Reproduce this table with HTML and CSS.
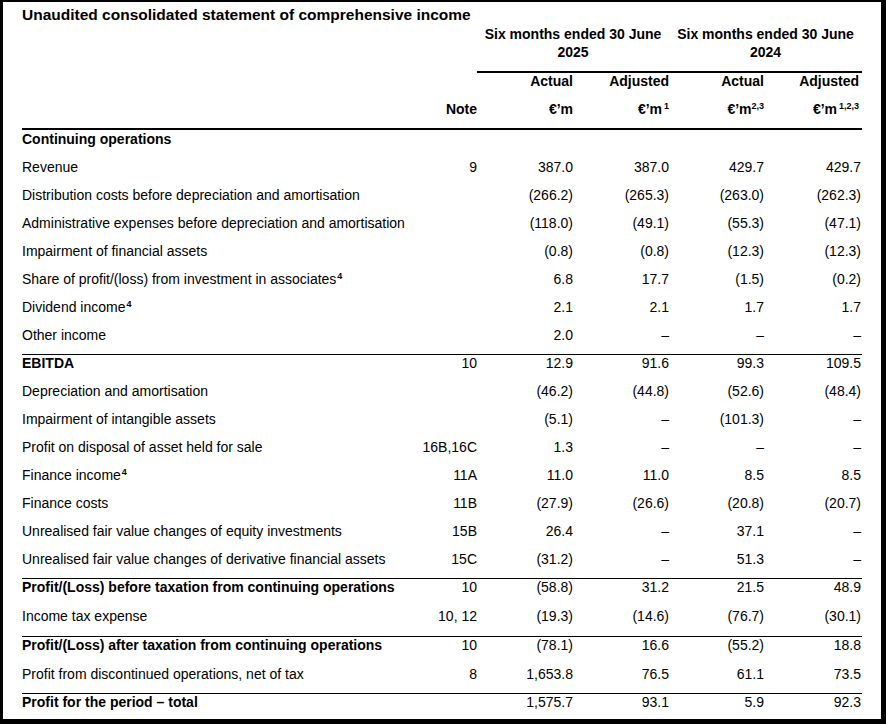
FILE: index.html
```html
<!DOCTYPE html>
<html lang="en">
<head>
<meta charset="utf-8">
<title>Unaudited consolidated statement of comprehensive income</title>
<link rel="stylesheet" href="styles.css">
</head>
<body>
<div class="page">
  <h1 class="title">Unaudited consolidated statement of comprehensive income</h1>
  <table class="stmt">
    <colgroup>
      <col class="c-label">
      <col class="c-note">
      <col class="c-n1">
      <col class="c-n2">
      <col class="c-n3">
      <col class="c-n4">
    </colgroup>
    <thead>
      <tr class="h-period">
        <th></th>
        <th></th>
        <th colspan="2" class="period">Six months ended 30 June<br>2025</th>
        <th colspan="2" class="period">Six months ended 30 June<br>2024</th>
      </tr>
      <tr class="h-kind">
        <th></th>
        <th></th>
        <th class="num">Actual</th>
        <th class="num">Adjusted</th>
        <th class="num">Actual</th>
        <th class="num last">Adjusted</th>
      </tr>
      <tr class="h-unit">
        <th></th>
        <th class="num">Note</th>
        <th class="num">€’m</th>
        <th class="num">€’m<sup class="fn-gap">1</sup></th>
        <th class="num">€’m<sup>2,3</sup></th>
        <th class="num last">€’m<sup class="fn-gap">1,2,3</sup></th>
      </tr>
    </thead>
    <tbody>
      <tr class="bold"><td>Continuing operations</td><td></td><td></td><td></td><td></td><td></td></tr>
      <tr><td>Revenue</td><td class="num">9</td><td class="num">387.0</td><td class="num">387.0</td><td class="num">429.7</td><td class="num last">429.7</td></tr>
      <tr><td>Distribution costs before depreciation and amortisation</td><td class="num"></td><td class="num">(266.2)</td><td class="num">(265.3)</td><td class="num">(263.0)</td><td class="num last">(262.3)</td></tr>
      <tr><td>Administrative expenses before depreciation and amortisation</td><td class="num"></td><td class="num">(118.0)</td><td class="num">(49.1)</td><td class="num">(55.3)</td><td class="num last">(47.1)</td></tr>
      <tr><td>Impairment of financial assets</td><td class="num"></td><td class="num">(0.8)</td><td class="num">(0.8)</td><td class="num">(12.3)</td><td class="num last">(12.3)</td></tr>
      <tr><td>Share of profit/(loss) from investment in associates<sup class="lbl-fn">4</sup></td><td class="num"></td><td class="num">6.8</td><td class="num">17.7</td><td class="num">(1.5)</td><td class="num last">(0.2)</td></tr>
      <tr><td>Dividend income<sup class="lbl-fn">4</sup></td><td class="num"></td><td class="num">2.1</td><td class="num">2.1</td><td class="num">1.7</td><td class="num last">1.7</td></tr>
      <tr><td>Other income</td><td class="num"></td><td class="num">2.0</td><td class="num">–</td><td class="num">–</td><td class="num last">–</td></tr>
      <tr class="rule bold-label"><td>EBITDA</td><td class="num">10</td><td class="num">12.9</td><td class="num">91.6</td><td class="num">99.3</td><td class="num last">109.5</td></tr>
      <tr><td>Depreciation and amortisation</td><td class="num"></td><td class="num">(46.2)</td><td class="num">(44.8)</td><td class="num">(52.6)</td><td class="num last">(48.4)</td></tr>
      <tr><td>Impairment of intangible assets</td><td class="num"></td><td class="num">(5.1)</td><td class="num">–</td><td class="num">(101.3)</td><td class="num last">–</td></tr>
      <tr><td>Profit on disposal of asset held for sale</td><td class="num">16B,16C</td><td class="num">1.3</td><td class="num">–</td><td class="num">–</td><td class="num last">–</td></tr>
      <tr><td>Finance income<sup class="lbl-fn">4</sup></td><td class="num">11A</td><td class="num">11.0</td><td class="num">11.0</td><td class="num">8.5</td><td class="num last">8.5</td></tr>
      <tr><td>Finance costs</td><td class="num">11B</td><td class="num">(27.9)</td><td class="num">(26.6)</td><td class="num">(20.8)</td><td class="num last">(20.7)</td></tr>
      <tr><td>Unrealised fair value changes of equity investments</td><td class="num">15B</td><td class="num">26.4</td><td class="num">–</td><td class="num">37.1</td><td class="num last">–</td></tr>
      <tr><td>Unrealised fair value changes of derivative financial assets</td><td class="num">15C</td><td class="num">(31.2)</td><td class="num">–</td><td class="num">51.3</td><td class="num last">–</td></tr>
      <tr class="rule bold-label tall"><td>Profit/(Loss) before taxation from continuing operations</td><td class="num">10</td><td class="num">(58.8)</td><td class="num">31.2</td><td class="num">21.5</td><td class="num last">48.9</td></tr>
      <tr class="tall"><td>Income tax expense</td><td class="num">10, 12</td><td class="num">(19.3)</td><td class="num">(14.6)</td><td class="num">(76.7)</td><td class="num last">(30.1)</td></tr>
      <tr class="rule bold-label tall"><td>Profit/(Loss) after taxation from continuing operations</td><td class="num">10</td><td class="num">(78.1)</td><td class="num">16.6</td><td class="num">(55.2)</td><td class="num last">18.8</td></tr>
      <tr><td>Profit from discontinued operations, net of tax</td><td class="num">8</td><td class="num">1,653.8</td><td class="num">76.5</td><td class="num">61.1</td><td class="num last">73.5</td></tr>
      <tr class="rule bold-label"><td>Profit for the period – total</td><td class="num"></td><td class="num">1,575.7</td><td class="num">93.1</td><td class="num">5.9</td><td class="num last">92.3</td></tr>
    </tbody>
  </table>
</div>
</body>
</html>
```
FILE: styles.css
```css
html, body {
  margin: 0;
  padding: 0;
  background: #000;
}

body {
  font-family: "Liberation Sans", Arial, sans-serif;
  color: #000;
}

.page {
  margin: 2px 5px 0 3px;
  width: 878px;
  height: 717px;
  background: #fff;
  box-sizing: border-box;
  padding: 0 0 0 19px;
  overflow: hidden;
}

.title {
  margin: 0;
  padding-top: 4px;
  font-size: 15.5px;
  line-height: 18px;
  font-weight: bold;
}

.stmt {
  border-collapse: separate;
  border-spacing: 0;
  table-layout: fixed;
  width: 840px;
  font-size: 14px;
  line-height: 16px;
}

.c-label { width: 398px; }
.c-note { width: 57px; }
.c-n1 { width: 96px; }
.c-n2 { width: 96px; }
.c-n3 { width: 95px; }
.c-n4 { width: 98px; }

.stmt th,
.stmt td {
  padding: 0;
  vertical-align: top;
  white-space: nowrap;
}

.stmt th {
  font-weight: bold;
}

.num {
  text-align: right;
}

.num.last {
  padding-right: 1px;
}

.h-period th {
  height: 49px;
  padding-top: 1px;
  box-sizing: border-box;
}

.period {
  text-align: center;
  line-height: 18px;
  border-bottom: 2px solid #000;
}

.h-kind th {
  padding-top: 0;
  padding-bottom: 12px;
}

.h-unit th {
  padding-top: 0;
  padding-bottom: 11px;
  border-bottom: 2px solid #000;
}

.h-kind th.last,
.h-unit th.last {
  padding-right: 3px;
}

sup {
  font-size: 9px;
  line-height: 0;
  vertical-align: 5px;
}

.fn-gap {
  margin-left: 2px;
}

.lbl-fn {
  font-weight: bold;
  font-size: 9px;
  margin-left: 1px;
}

.stmt td {
  padding-top: 1px;
  padding-bottom: 11px;
}

.bold td:first-child,
.bold-label td:first-child {
  font-weight: bold;
}

.rule td {
  border-top: 1px solid #000;
  padding-top: 0;
}

.tall td {
  padding-bottom: 12px;
}
```
